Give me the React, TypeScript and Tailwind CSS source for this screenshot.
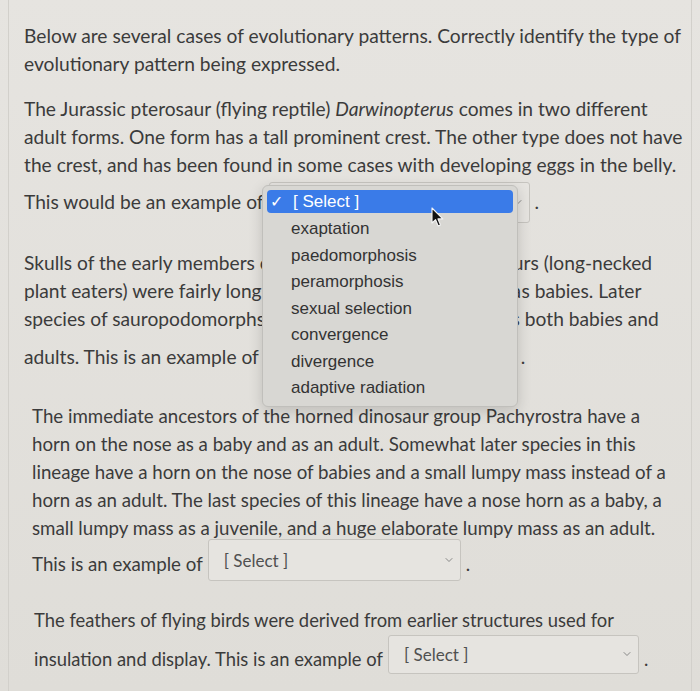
import { ChevronDown } from "lucide-react"

const options = [
  "exaptation",
  "paedomorphosis",
  "peramorphosis",
  "sexual selection",
  "convergence",
  "divergence",
  "adaptive radiation",
]

function SelectBox({ width, height = "h-[41px]" }: { width: string; height?: string }) {
  return (
    <span
      className={`inline-flex ${height} ${width} shrink-0 items-center justify-between rounded-[3px] border border-[#c6c4bf] bg-[#e6e4e0] pl-[15px] pr-[5px] text-[17px] leading-none text-[#505050]`}
    >
      <span>[ Select ]</span>
      <ChevronDown className="size-[12px] text-[#777]" strokeWidth={1.7} />
    </span>
  )
}

function Cursor() {
  return (
    <svg
      className="absolute left-[431px] top-[207px]"
      width="13"
      height="21"
      viewBox="0 0 13 21"
    >
      <path
        d="M1 1 L1 16 L4.6 12.7 L7.2 19 L9.5 18 L6.9 11.9 L11.8 11.9 Z"
        fill="#111"
        stroke="#f4f4f4"
        strokeWidth="1.1"
        strokeLinejoin="round"
      />
    </svg>
  )
}

function OptionMenu() {
  return (
    <div className="absolute left-[262px] top-[185px] w-[256px] rounded-[6px] border border-[#c0bfbb] bg-[#d8d7d3] px-[4px] pb-[4px] pt-[4px] font-['Liberation_Sans',Arial,sans-serif] text-[17px] text-[#333] shadow-[0_4px_14px_rgba(0,0,0,0.16)]">
      <div className="mb-[3px] flex h-[23px] items-center rounded-[4px] bg-[#3a7be8] pl-[3px] text-white">
        <span className="w-[23px] text-[16px]">✓</span>
        <span>[ Select ]</span>
      </div>
      {options.map((o) => (
        <div key={o} className="flex h-[26.5px] items-center pl-[24px]">
          {o}
        </div>
      ))}
    </div>
  )
}

export default function App() {
  return (
    <div className="relative h-[691px] w-[700px] overflow-hidden bg-gradient-to-b from-[#e6e4e0] to-[#dfddd8] font-['Lato','Noto_Sans',sans-serif] leading-[28px] text-[#3b3b3b]">
      <div className="mx-[8px] h-full border-x border-[#d2d0cb]">
        <div className="pl-[15px] pt-[22px] text-[19.2px]">
          <p className="whitespace-nowrap">
            Below are several cases of evolutionary patterns. Correctly identify the type of
            <br />
            evolutionary pattern being expressed.
          </p>

          <p className="mt-[17px] whitespace-nowrap">
            The Jurassic pterosaur (flying reptile) <em>Darwinopterus</em> comes in two different
            <br />
            adult forms. One form has a tall prominent crest. The other type does not have
            <br />
            the crest, and has been found in some cases with developing eggs in the belly.
            <span className="flex h-[46px] items-center gap-[5px]">
              This would be an example of
              <SelectBox width="w-[261px]" />
              <span>.</span>
            </span>
          </p>

          <p className="mt-[24px] whitespace-nowrap">
            Skulls of the early members{" "}
            <span className="tracking-[-0.2px]">of the sauropodomorph dinosa</span>urs (long-necked
            <br />
            plant eaters) were fairly long{" "}
            <span className="tracking-[0.4px]">and flat as adults, but short a</span>s babies. Later
            <br />
            species of sauropodomorphs{" "}
            <span className="tracking-[-0.1px]">had shorter and taller skulls a</span>s both babies and
            <span className="flex h-[48px] items-center gap-[5px]">
              adults. This is an example of
              <SelectBox width="w-[252px]" />
              <span>.</span>
            </span>
          </p>
        </div>

        <div className="pl-[23px]">
          <p className="mt-[21px] whitespace-nowrap text-[18.7px]">
            The immediate ancestors of the horned dinosaur group Pachyrostra have a
            <br />
            horn on the nose as a baby and as an adult. Somewhat later species in this
            <br />
            lineage have a horn on the nose of babies and a small lumpy mass instead of a
            <br />
            horn as an adult. The last species of this lineage have a nose horn as a baby, a
            <br />
            small lumpy mass as a juvenile, and a huge elaborate lumpy mass as an adult.
            <span className="flex h-[36px] items-center gap-[5px]">
              <span className="pt-[7px]">This is an example of</span>
              <SelectBox width="w-[253px]" height="h-[42px]" />
              <span className="pt-[7px]">.</span>
            </span>
          </p>

          <p className="mt-[28px] whitespace-nowrap pl-[2px] text-[18.4px]">
            The feathers of flying birds were derived from earlier structures used for
            <span className="flex h-[40px] items-center gap-[5px]">
              <span className="pt-[9px]">insulation and display. This is an example of</span>
              <SelectBox width="w-[251px]" height="h-[39px]" />
              <span className="pt-[9px]">.</span>
            </span>
          </p>
        </div>
      </div>

      <OptionMenu />
      <Cursor />
    </div>
  )
}
